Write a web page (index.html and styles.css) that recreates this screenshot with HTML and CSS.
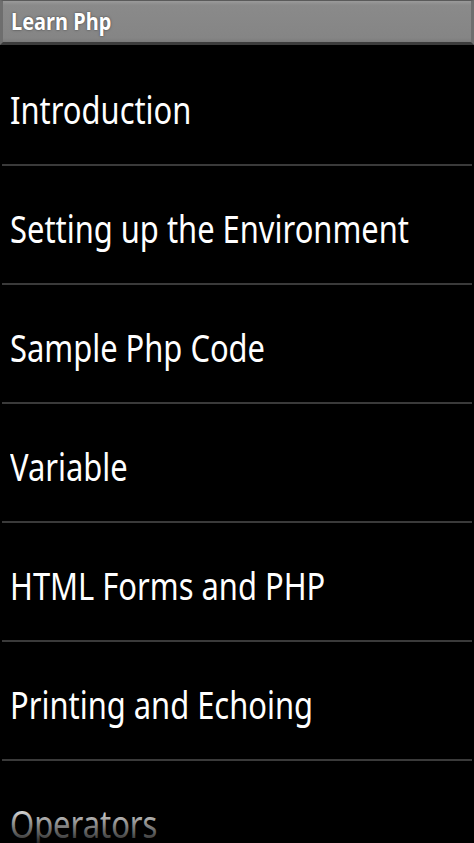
FILE: index.html
```html
<!DOCTYPE html>
<html>
<head>
<meta charset="utf-8">
<link rel="stylesheet" href="styles.css">
</head>
<body>
<div class="screen">
  <div class="titlebar"><span class="title">Learn Php</span></div>
  <ul class="list">
    <li class="item"><span class="label">Introduction</span></li>
    <li class="item"><span class="label">Setting up the Environment</span></li>
    <li class="item"><span class="label">Sample Php Code</span></li>
    <li class="item"><span class="label">Variable</span></li>
    <li class="item"><span class="label">HTML Forms and PHP</span></li>
    <li class="item"><span class="label">Printing and Echoing</span></li>
    <li class="item"><span class="label">Operators</span></li>
  </ul>
  <div class="fade"></div>
</div>
</body>
</html>
```
FILE: styles.css
```css
html, body {
  margin: 0;
  padding: 0;
  background: #000;
}
.screen {
  position: relative;
  width: 474px;
  height: 843px;
  overflow: hidden;
  background: #000;
  font-family: "Noto Sans", "Open Sans", sans-serif;
}
.titlebar {
  height: 45px;
  box-sizing: border-box;
  background: linear-gradient(#9a9a9a, #8a8a8a 10%, #858585 90%, #7a7a7a);
  border-left: 3px solid #6e6e6e;
  border-right: 3px solid #6e6e6e;
  border-top: 1px solid #5a5a5a;
  border-bottom: 3px solid #3c3c3c;
  display: flex;
  align-items: center;
  padding-left: 8px;
  margin-bottom: 2px;
}
.title {
  color: #fff;
  font-weight: bold;
  font-size: 20px;
  display: inline-block;
  transform: scaleY(1.19);
  text-shadow: 0 0 2px rgba(0,0,0,0.6);
}
.list {
  list-style: none;
  margin: 0;
  padding: 0;
}
.item {
  height: 117px;
  display: flex;
  align-items: center;
  padding-left: 8px;
  margin: 0 2px;
  border-bottom: 2px solid #3a3a3a;
}
.label {
  color: #fff;
  font-size: 30.9px;
  display: inline-block;
  transform: scaleY(1.25);
  transform-origin: left center;
  padding-top: 4px;
}
.fade {
  position: absolute;
  left: 0;
  right: 0;
  bottom: 0;
  height: 40px;
  background: linear-gradient(rgba(0,0,0,0), rgba(0,0,0,0.85));
}
```
